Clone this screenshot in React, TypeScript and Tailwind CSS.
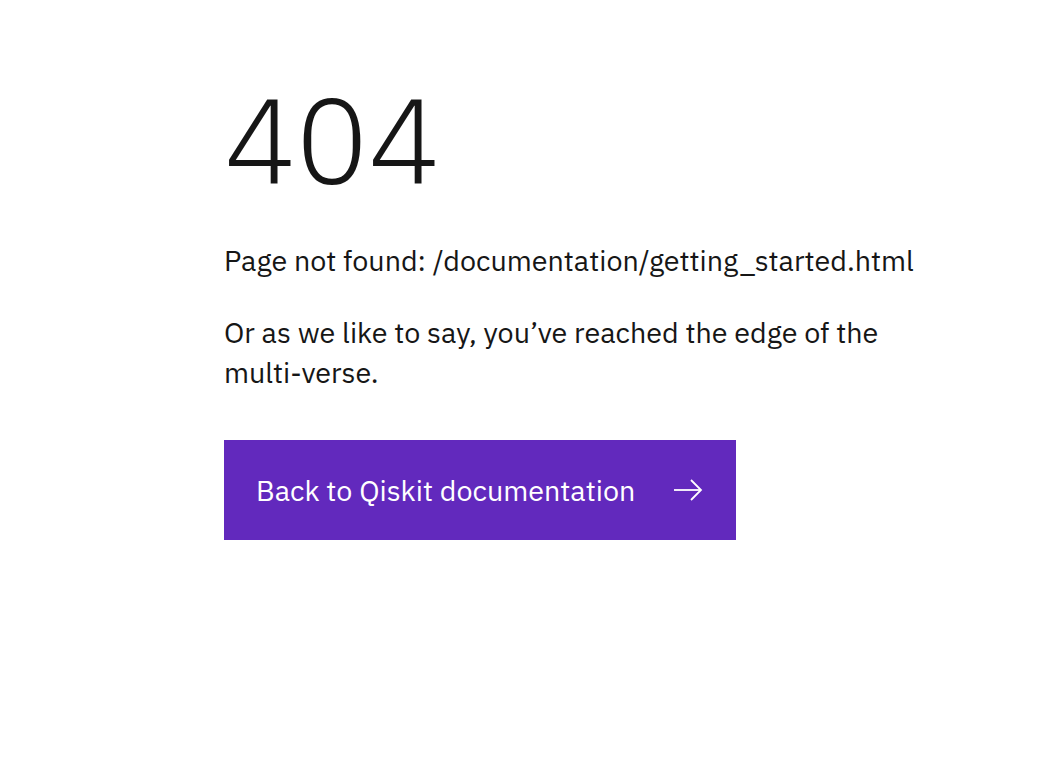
export default function App() {
  return (
    <div
      className="min-h-[776px] bg-white text-[#161616] pl-[224px] pt-[79px]"
      style={{ fontFamily: '"IBM Plex Sans", Roboto, "Noto Sans", sans-serif' }}
    >
      <h1 className="text-[120px] leading-none font-light">404</h1>
      <p className="mt-[42px] text-[28.7px] leading-[40px]">
        Page not found: /documentation/getting_started.html
      </p>
      <p className="mt-[32px] text-[28.7px] leading-[40px] max-w-[680px]">
        Or as we like to say, you’ve reached the edge of the multi-verse.
      </p>
      <a
        href="#"
        className="mt-[47px] flex h-[100px] w-[512px] items-center justify-between bg-[#6229bd] pl-[32px] pr-[33px] text-[28.7px] text-white"
      >
        <span className="pt-[2px]">Back to Qiskit documentation</span>
        <svg width="30" height="22" viewBox="0 0 30 22" fill="none" stroke="currentColor" strokeWidth="1.8">
          <path d="M1 11h27" />
          <path d="M18 1l10 10-10 10" />
        </svg>
      </a>
    </div>
  );
}
